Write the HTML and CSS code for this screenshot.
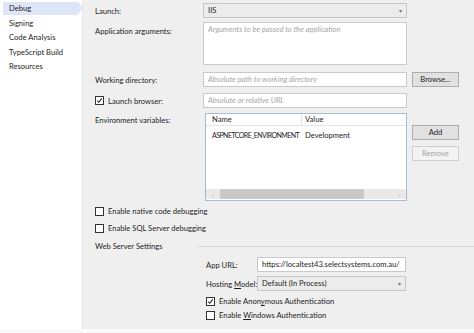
FILE: index.html
```html
<!DOCTYPE html>
<html lang="en">
<head>
    <meta charset="UTF-8">
    <title>Project Properties - Debug</title>
    <link rel="stylesheet" href="styles.css">
</head>
<body>
    <div class="window">
        <!-- Pestañas laterales -->
        <nav class="sidebar">
            <div class="tab active">Debug</div>
            <div class="tab">Signing</div>
            <div class="tab">Code Analysis</div>
            <div class="tab">TypeScript Build</div>
            <div class="tab">Resources</div>
        </nav>

        <main class="panel">
            <div class="row row-launch">
                <span class="label">Launch:</span>
                <div class="select">IIS<span class="caret">&#9662;</span></div>
            </div>

            <div class="row row-args">
                <span class="label label-top">Application arguments:</span>
                <div class="textarea"><span class="ph">Arguments to be passed to the application</span></div>
            </div>

            <div class="row row-dir">
                <span class="label">Working directory:</span>
                <div class="input"><span class="ph">Absolute path to working directory</span></div>
                <div class="btn">Browse...</div>
            </div>

            <div class="row row-browser">
                <span class="label check-label"><span class="box checked"><svg viewBox="0 0 8 8"><path d="M1.5 4.2 L3.2 6 L6.6 1.6" fill="none" stroke="#222" stroke-width="1.2"/></svg></span><span>Launch browser:</span></span>
                <div class="input"><span class="ph">Absolute or relative URL</span></div>
            </div>

            <div class="row row-env">
                <span class="label label-top">Environment variables:</span>
                <div class="grid">
                    <div class="grid-head">
                        <span class="col-name">Name</span>
                        <span class="col-value">Value</span>
                    </div>
                    <div class="grid-row">
                        <span class="col-name env-key">ASPNETCORE_ENVIRONMENT</span>
                        <span class="col-value">Development</span>
                    </div>
                    <div class="grid-fill"></div>
                    <div class="hscroll">
                        <span class="arrow">&#8249;</span>
                        <span class="thumb"></span>
                        <span class="arrow">&#8250;</span>
                    </div>
                </div>
                <div class="btn-stack">
                    <div class="btn">Add</div>
                    <div class="btn disabled">Remove</div>
                </div>
            </div>

            <div class="check row-native"><span class="box"></span><span>Enable native code debugging</span></div>
            <div class="check row-sql"><span class="box"></span><span>Enable SQL Server debugging</span></div>

            <div class="section">
                <span class="section-title">Web Server Settings</span>
                <span class="section-line"></span>
            </div>

            <div class="web">
                <div class="web-row">
                    <span class="web-label">App URL:</span>
                    <div class="input url">https://localtest43.selectsystems.com.au/</div>
                </div>
                <div class="web-row">
                    <span class="web-label">Hosting <u>M</u>odel:</span>
                    <div class="select">Default (In Process)<span class="caret">&#9662;</span></div>
                </div>
                <div class="check web-check"><span class="box checked"><svg viewBox="0 0 8 8"><path d="M1.5 4.2 L3.2 6 L6.6 1.6" fill="none" stroke="#222" stroke-width="1.2"/></svg></span><span>Enable Anon<u>y</u>mous Authentication</span></div>
                <div class="check web-check"><span class="box"></span><span>Enable <u>W</u>indows Authentication</span></div>
            </div>
        </main>
    </div>
</body>
</html>
```

FILE: styles.css
```css
body {
    margin: 0;
    padding: 0;
    font-family: Lato, "Noto Sans", sans-serif;
    font-size: 7.6px;
    color: #1e1e1e;
    background: #fafafa;
}

.window {
    display: flex;
    width: 474px;
    height: 329px;
    overflow: hidden;
}

/* Barra lateral */
.sidebar {
    width: 82px;
    background: #fff;
    padding-top: 2px;
    flex-shrink: 0;
}

.tab {
    height: 14.6px;
    line-height: 14.6px;
    padding-left: 9px;
    white-space: nowrap;
}

.tab.active {
    position: relative;
    background: #dfe5f8;
    margin-left: 3px;
    padding-left: 6px;
    width: 69px;
    height: 13px;
    line-height: 13px;
    margin-bottom: 0.5px;
}

.tab.active::after {
    content: "";
    position: absolute;
    right: -6px;
    top: 0;
    border-left: 6px solid #dfe5f8;
    border-top: 6.5px solid transparent;
    border-bottom: 6.5px solid transparent;
}

/* Panel principal */
.panel {
    flex: 1;
    background: #efefef;
    border-left: 1px solid #e6e6e6;
    padding: 3px 0 0 12px;
    white-space: nowrap;
}

.row {
    display: grid;
    grid-template-columns: 103px 204px 47px;
    column-gap: 5px;
    align-items: center;
}

.label {
    align-self: center;
}

.label-top {
    align-self: start;
    padding-top: 4px;
}

.row-args { margin-top: 4px; }
.row-dir { margin-top: 7px; }
.row-browser { margin-top: 6px; }
.row-env { margin-top: 5px; align-items: start; }
.row-env .label-top { padding-top: 2px; }

.select, .input, .textarea {
    box-sizing: border-box;
    background: #fff;
    border: 1px solid #c9c9c9;
    padding: 0 4px;
    height: 15px;
    line-height: 13px;
    white-space: nowrap;
    overflow: hidden;
}

.select {
    position: relative;
    background: #ececec;
    border-color: #c6c6c6;
}

.caret {
    position: absolute;
    right: 4px;
    top: 0;
    color: #777;
    font-size: 6px;
}

.textarea {
    height: 43px;
    line-height: 13px;
}

.ph {
    color: #a6a6a6;
    font-style: italic;
}

.btn {
    box-sizing: border-box;
    height: 15px;
    line-height: 13px;
    text-align: center;
    background: #e1e1e1;
    border: 1px solid #adadad;
}

.btn.disabled {
    background: #f3f3f3;
    border-color: #cfcfcf;
    color: #a3a3a3;
}

.btn-stack {
    display: flex;
    flex-direction: column;
    gap: 6px;
    padding-top: 12px;
}

.check-label {
    display: flex;
    align-items: center;
}

.box {
    box-sizing: border-box;
    display: inline-block;
    width: 9px;
    height: 9px;
    border: 1px solid #333;
    background: #fff;
    margin-right: 4px;
    flex-shrink: 0;
}

.box svg {
    display: block;
    width: 7px;
    height: 7px;
}

/* Tabla de variables */
.grid {
    box-sizing: border-box;
    margin-left: 2px;
    width: 202px;
    height: 88px;
    border: 1px solid #a9bccf;
    background: #fff;
    display: flex;
    flex-direction: column;
}

.grid-head, .grid-row {
    display: flex;
    height: 11px;
    line-height: 11px;
}

.grid-head {
    border-bottom: 1px solid #e5e5e5;
}

.grid-row {
    margin-top: 4px;
}

.col-name {
    width: 96px;
    padding-left: 6px;
    box-sizing: border-box;
    white-space: nowrap;
    flex-shrink: 0;
}

.env-key {
    font-size: 7px;
    letter-spacing: -0.55px;
}

.grid-head .col-name {
    border-right: 1px solid #e5e5e5;
}

.col-value {
    padding-left: 3px;
}

.grid-fill {
    flex: 1;
}

.hscroll {
    display: flex;
    align-items: center;
    height: 10px;
    margin-bottom: 1px;
    background: #e9e9e9;
    color: #999;
    font-size: 6px;
}

.arrow {
    width: 14px;
    text-align: center;
}

.thumb {
    height: 10px;
    width: 144px;
    background: #c9c9c9;
}

.hscroll .arrow:last-child {
    margin-left: auto;
}

.check {
    display: flex;
    align-items: center;
    height: 12px;
}

.row-native { margin-top: 4px; }
.row-sql { margin-top: 5px; }

.section {
    display: flex;
    align-items: center;
    margin-top: 6px;
    height: 12px;
}

.section-title {
    width: 102px;
}

.section-line {
    flex: 1;
    border-top: 1px solid #d6d6d6;
}

/* Configuración del servidor web */
.web {
    padding-left: 111px;
    margin-top: 5px;
}

.web-row {
    display: grid;
    grid-template-columns: 51px 149px;
    align-items: center;
    margin-bottom: 4px;
}

.input.url {
    color: #1e1e1e;
}

.web-check {
    margin-top: 3px;
}

.web-check + .web-check {
    margin-top: 2px;
}
```
